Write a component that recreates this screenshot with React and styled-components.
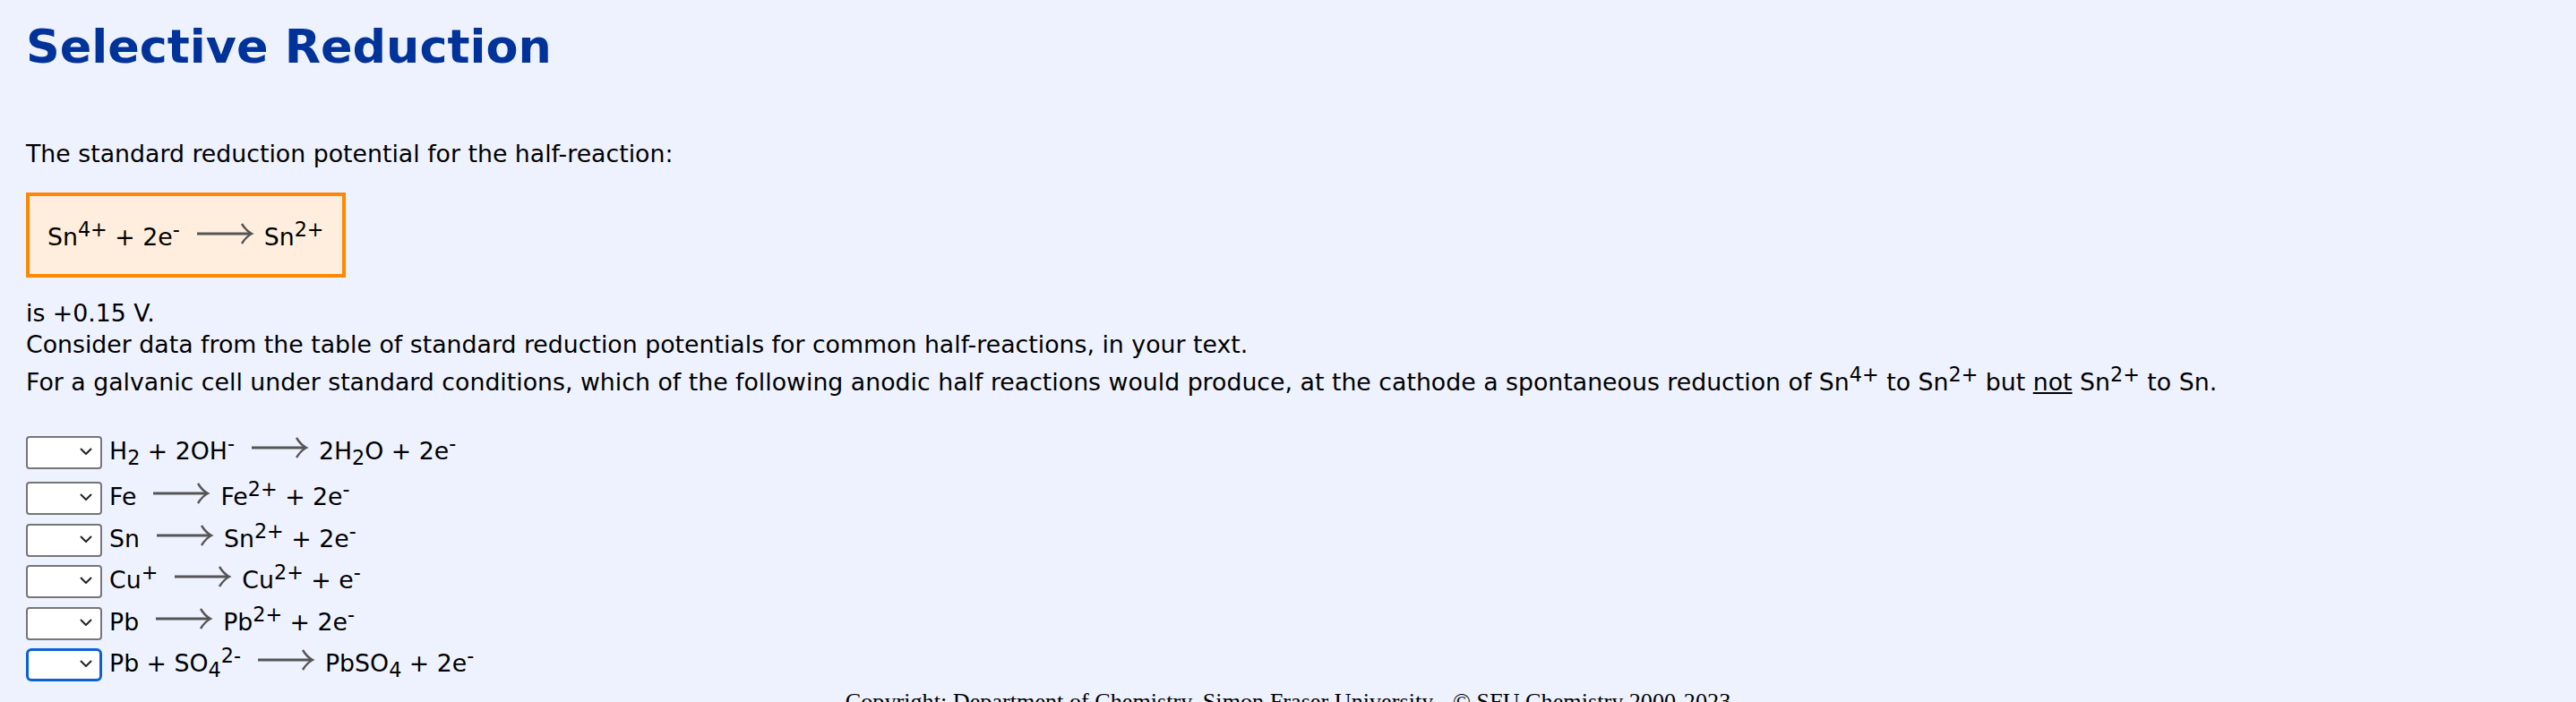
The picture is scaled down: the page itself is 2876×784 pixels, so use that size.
import styled, { createGlobalStyle } from "styled-components";

const GlobalStyle = createGlobalStyle`
  body {
    margin: 0;
    background: #eef2ff;
  }
`;

const Arrow = () => (
  <ArrowSvg viewBox="0 0 62 14" width="62" height="14">
    <path d="M0 7 H60" stroke="#555" strokeWidth="3" fill="none" />
    <path d="M50 -4 Q55 4 61 7 Q55 10 50 18" stroke="#555" strokeWidth="2.4" fill="none" />
  </ArrowSvg>
);

const Chevron = () => (
  <ChevronSvg viewBox="0 0 14 8" width="14" height="8">
    <path d="M1 1 L7 7 L13 1" stroke="#222" strokeWidth="2" fill="none" />
  </ChevronSvg>
);

const choices = [
  {
    id: "h2",
    tall: true,
    body: (
      <>
        H<sub>2</sub> + 2OH<sup>-</sup>
        <Arrow />
        2H<sub>2</sub>O + 2e<sup>-</sup>
      </>
    ),
  },
  {
    id: "fe",
    body: (
      <>
        Fe
        <Arrow />
        Fe<sup>2+</sup> + 2e<sup>-</sup>
      </>
    ),
  },
  {
    id: "sn",
    body: (
      <>
        Sn
        <Arrow />
        Sn<sup>2+</sup> + 2e<sup>-</sup>
      </>
    ),
  },
  {
    id: "cu",
    body: (
      <>
        Cu<sup>+</sup>
        <Arrow />
        Cu<sup>2+</sup> + e<sup>-</sup>
      </>
    ),
  },
  {
    id: "pb",
    body: (
      <>
        Pb
        <Arrow />
        Pb<sup>2+</sup> + 2e<sup>-</sup>
      </>
    ),
  },
  {
    id: "pbso4",
    focused: true,
    body: (
      <>
        Pb + SO<sub>4</sub>
        <sup>2-</sup>
        <Arrow />
        PbSO<sub>4</sub> + 2e<sup>-</sup>
      </>
    ),
  },
];

const App = () => {
  return (
    <Page>
      <GlobalStyle />
      <Title>Selective Reduction</Title>
      <Lead>The standard reduction potential for the half-reaction:</Lead>
      <ReactionBox>
        Sn<sup>4+</sup> + 2e<sup>-</sup>
        <Arrow />
        Sn<sup>2+</sup>
      </ReactionBox>
      <Text>
        is +0.15 V.
        <br />
        Consider data from the table of standard reduction potentials for common half-reactions, in your text.
      </Text>
      <Question>
        For a galvanic cell under standard conditions, which of the following anodic half reactions would produce, at
        the cathode a spontaneous reduction of Sn<sup>4+</sup> to Sn<sup>2+</sup> but <u>not</u> Sn<sup>2+</sup> to
        Sn.
      </Question>
      <Choices>
        {choices.map((c) => (
          <Row key={c.id} $tall={c.tall}>
            <SelectWrap>
              <Select $focused={c.focused} defaultValue="">
                <option value=""></option>
                <option value="yes">Yes</option>
                <option value="no">No</option>
              </Select>
              <Chevron />
            </SelectWrap>
            <Formula>{c.body}</Formula>
          </Row>
        ))}
      </Choices>
      <Footer>Copyright: Department of Chemistry, Simon Fraser University - © SFU Chemistry 2000-2023</Footer>
    </Page>
  );
};

export default App;

const Page = styled.div`
  padding: 21px 29px 0;
  font-family: Verdana, "DejaVu Sans", sans-serif;
  font-size: 26.75px;
  color: #000;

  sup,
  sub {
    line-height: 0;
  }
`;

const Title = styled.h1`
  margin: 0;
  font-size: 52.4px;
  line-height: 62px;
  font-weight: bold;
  color: #003399;
`;

const Lead = styled.p`
  margin: 73px 0 0;
  line-height: 31px;
`;

const ReactionBox = styled.div`
  display: inline-block;
  margin-top: 28px;
  padding: 30px 20px 26px;
  border: 4px solid #ff8800;
  background: #ffeedd;
  line-height: 31px;
  white-space: nowrap;
`;

const Text = styled.div`
  margin-top: 22px;
  line-height: 35px;
`;

const Question = styled.p`
  margin: 7px 0 0;
  line-height: 35px;
`;

const ArrowSvg = styled.svg`
  overflow: visible;
  vertical-align: 6px;
  margin: 0 13px 0 19px;
`;

const Choices = styled.div`
  margin-top: 41px;
`;

const Row = styled.div`
  display: flex;
  align-items: center;
  height: 37px;
  margin-bottom: ${(p) => (p.$tall ? "14px" : "9.5px")};
`;

const SelectWrap = styled.div`
  position: relative;
  width: 85px;
  height: 37px;
  flex: none;
`;

const Select = styled.select`
  appearance: none;
  box-sizing: border-box;
  width: 100%;
  height: 100%;
  margin: 0;
  background: #fff;
  border: ${(p) => (p.$focused ? "3.5px solid #0b61cf" : "2px solid #767676")};
  border-radius: ${(p) => (p.$focused ? "6px" : "4px")};
  outline: none;
`;

const ChevronSvg = styled.svg`
  position: absolute;
  right: 11px;
  top: 15px;
  pointer-events: none;
`;

const Formula = styled.span`
  margin-left: 8px;
  line-height: 31px;
  white-space: nowrap;
`;

const Footer = styled.div`
  margin-top: 8px;
  text-align: center;
  font-family: "Liberation Serif", "Times New Roman", serif;
  font-size: 26.2px;
  line-height: 30px;
`;
